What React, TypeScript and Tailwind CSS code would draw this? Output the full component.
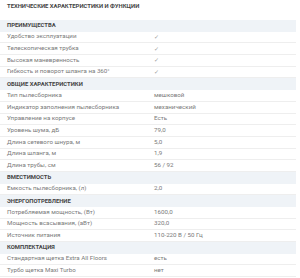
import React from "react";

type Row = { label: string; value?: string; check?: boolean };
type Section = { title: string; rows: Row[] };

const sections: Section[] = [
  {
    title: "ПРЕИМУЩЕСТВА",
    rows: [
      { label: "Удобство эксплуатации", check: true },
      { label: "Телескопическая трубка", check: true },
      { label: "Высокая маневренность", check: true },
      { label: "Гибкость и поворот шланга на 360°", check: true },
    ],
  },
  {
    title: "ОБЩИЕ ХАРАКТЕРИСТИКИ",
    rows: [
      { label: "Тип пылесборника", value: "мешковой" },
      { label: "Индикатор заполнения пылесборника", value: "механический" },
      { label: "Управление на корпусе", value: "Есть" },
      { label: "Уровень шума, дБ", value: "79,0" },
      { label: "Длина сетевого шнура, м", value: "5,0" },
      { label: "Длина шланга, м", value: "1,9" },
      { label: "Длина трубы, см", value: "56 / 92" },
    ],
  },
  {
    title: "ВМЕСТИМОСТЬ",
    rows: [{ label: "Емкость пылесборника, (л)", value: "2,0" }],
  },
  {
    title: "ЭНЕРГОПОТРЕБЛЕНИЕ",
    rows: [
      { label: "Потребляемая мощность, (Вт)", value: "1600,0" },
      { label: "Мощность всасывания, (аВт)", value: "320,0" },
      { label: "Источник питания", value: "110-220 В / 50 Гц" },
    ],
  },
  {
    title: "КОМПЛЕКТАЦИЯ",
    rows: [
      { label: "Стандартная щетка Extra All Floors", value: "есть" },
      { label: "Турбо щетка Maxi Turbo", value: "нет" },
    ],
  },
];

export default function App() {
  return (
    <div
      className="w-[300px] h-[278px] bg-white overflow-hidden"
      style={{ fontFamily: "Roboto, 'Open Sans', sans-serif" }}
    >
      <div className="h-[20px] pl-[7px] pt-[1px] text-[5.9px] leading-[11px] font-bold text-[#444]">
        ТЕХНИЧЕСКИЕ ХАРАКТЕРИСТИКИ И ФУНКЦИИ
      </div>
      <div className="w-[296px] flex flex-col">
        {sections.map((s) => (
          <React.Fragment key={s.title}>
            <div className="h-[11.7px] flex items-center bg-[#eff3f7] pl-[7px] text-[5.9px] font-bold text-[#444]">
              {s.title}
            </div>
            {s.rows.map((r) => (
              <div
                key={r.label}
                className="h-[11.7px] flex items-center border-b border-[#eeeeee] text-[6.2px] text-[#7a7a7a]"
              >
                <div className="w-[154px] pl-[7px] whitespace-nowrap">{r.label}</div>
                <div className="whitespace-nowrap">
                  {r.check ? <span className="text-[#a0a0a0] text-[6px]">✓</span> : r.value}
                </div>
              </div>
            ))}
          </React.Fragment>
        ))}
      </div>
    </div>
  );
}
